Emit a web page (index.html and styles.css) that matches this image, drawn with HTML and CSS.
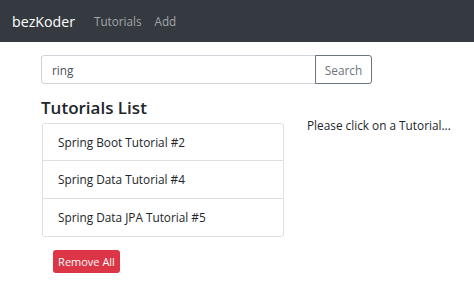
FILE: index.html
```html
<!DOCTYPE html>
<html lang="en">
<head>
  <meta charset="UTF-8">
  <title>bezKoder</title>
  <link rel="stylesheet" href="styles.css">
</head>
<body>
  <nav class="navbar">
    <a class="brand" href="#">bezKoder</a>
    <a class="nav-link" href="#">Tutorials</a>
    <a class="nav-link" href="#">Add</a>
  </nav>
  <div class="container">
    <div class="search">
      <input type="text" class="search-input" value="ring">
      <button class="search-btn">Search</button>
    </div>
    <div class="row">
      <div class="list-col">
        <h4>Tutorials List</h4>
        <ul class="list-group">
          <li>Spring Boot Tutorial #2</li>
          <li>Spring Data Tutorial #4</li>
          <li>Spring Data JPA Tutorial #5</li>
        </ul>
        <button class="remove-btn">Remove All</button>
      </div>
      <div class="detail-col">
        <p>Please click on a Tutorial...</p>
      </div>
    </div>
  </div>
</body>
</html>
```

FILE: styles.css
```css
body { margin: 0; font-family: "Open Sans", "Noto Sans", Arial, sans-serif; color: #212529; background: #fff; font-size: 11.8px; }
.navbar { display: flex; align-items: center; height: 42px; padding: 0 12px; background: #343a40; }
.brand { color: #fff; font-size: 14.2px; text-decoration: none; margin-right: 19px; }
.nav-link { color: #a3a6a9; font-size: 11.7px; text-decoration: none; margin-right: 13px; }
.container { padding: 13px 0 0 41px; }
.search { display: flex; width: 331px; height: 29px; }
.search-input { flex: 1; min-width: 0; box-sizing: border-box; height: 29px; border: 1px solid #ced4da; border-radius: 3px 0 0 3px; padding: 0 10px; font: inherit; color: #495057; }
.search-btn { box-sizing: border-box; height: 29px; width: 57px; border: 1px solid #6c757d; border-radius: 0 3px 3px 0; background: #fff; color: #6c757d; font: inherit; margin-left: -1px; }
.row { display: flex; }
.list-col { width: 243px; }
.list-col h4 { margin: 12px 0 3px; font-size: 17px; font-weight: 600; line-height: 24px; }
.list-group { list-style: none; margin: 0 0 0 1px; padding: 0; border: 1px solid #dfdfdf; border-radius: 3px; }
.list-group li { height: 37px; line-height: 37px; padding: 0 15px; border-top: 1px solid #dfdfdf; }
.list-group li:first-child { height: 36px; line-height: 36px; border-top: none; }
.remove-btn { margin: 13px 0 0 12px; height: 23px; width: 67px; padding: 0; border: none; border-radius: 3px; background: #dc3545; color: #fff; font: inherit; font-size: 11px; }
.detail-col { padding-left: 23px; }
.detail-col p { margin: 33px 0 0; }
```
